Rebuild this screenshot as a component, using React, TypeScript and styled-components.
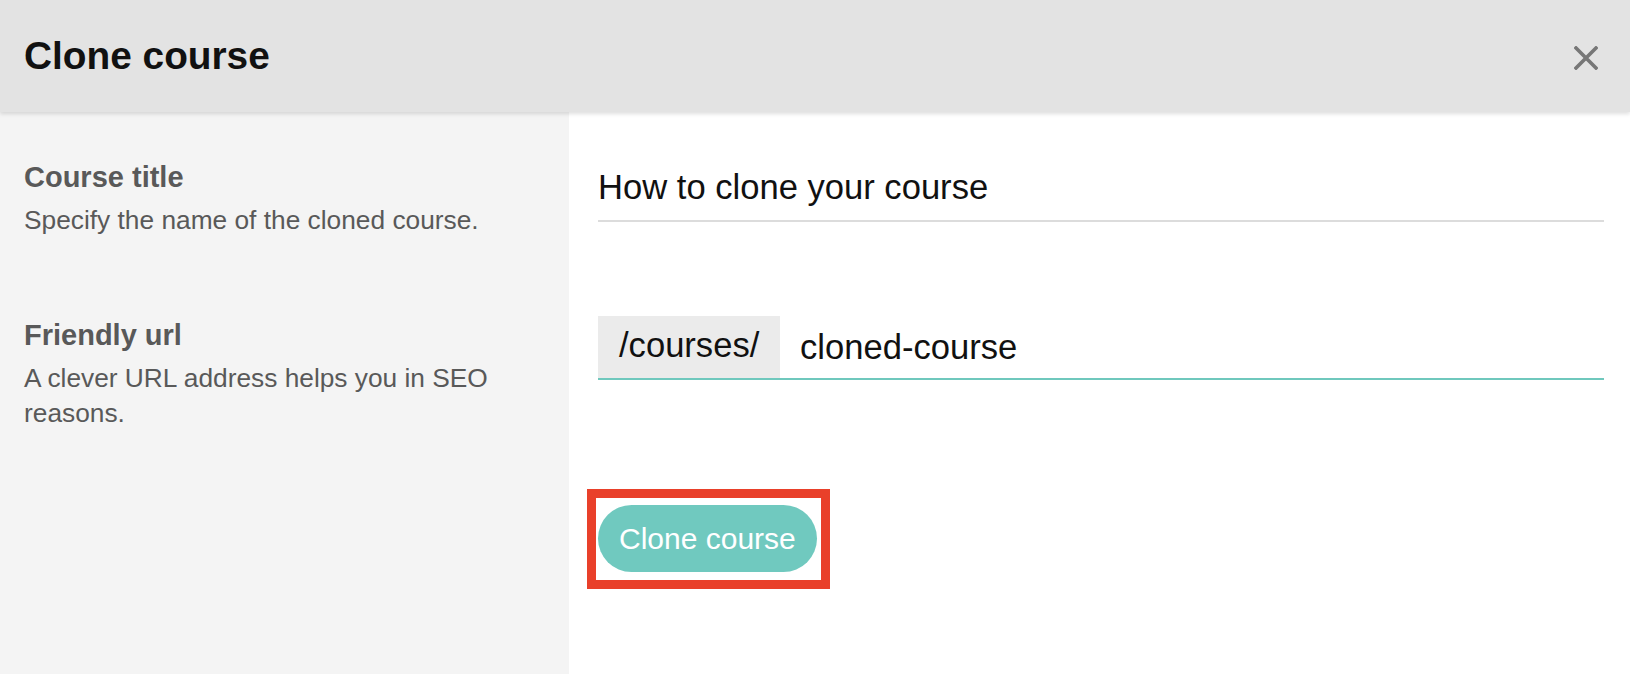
import React from "react";
import styled, { createGlobalStyle } from "styled-components";

const GlobalStyle = createGlobalStyle`
  html, body {
    margin: 0;
    padding: 0;
    background: #ffffff;
    font-family: "Liberation Sans", Arial, Helvetica, sans-serif;
  }
  * { box-sizing: border-box; }
`;

const Modal = styled.div`
  width: 1630px;
  height: 674px;
  display: flex;
  flex-direction: column;
  overflow: hidden;
  background: #ffffff;
`;

const Header = styled.header`
  position: relative;
  z-index: 1;
  flex: 0 0 112px;
  display: flex;
  align-items: center;
  justify-content: space-between;
  padding: 0 32px 0 24px;
  background: #e3e3e3;
  box-shadow: 0 2px 4px rgba(0, 0, 0, 0.13);
`;

const Title = styled.h1`
  margin: 0;
  font-size: 38.8px;
  font-weight: 700;
  color: #111111;
  line-height: 1;
`;

const CloseButton = styled.button`
  width: 24px;
  height: 24px;
  padding: 0;
  margin-top: 4px;
  border: 0;
  background: transparent;
  display: flex;
  align-items: center;
  justify-content: center;
  cursor: pointer;
`;

const Body = styled.div`
  flex: 1;
  display: flex;
`;

const Sidebar = styled.aside`
  flex: 0 0 569px;
  background: #f4f4f4;
  padding: 48px 60px 0 24px;
  display: flex;
  flex-direction: column;
  gap: 80px;
`;

const FieldInfo = styled.div`
  display: flex;
  flex-direction: column;
  gap: 9px;
`;

const Label = styled.div`
  font-size: 29px;
  font-weight: 700;
  line-height: 34px;
  color: #595959;
`;

const Hint = styled.div`
  font-size: 26.3px;
  line-height: 35px;
  color: #595959;
`;

const Main = styled.main`
  flex: 1;
  padding: 55px 26px 0 29px;
  display: flex;
  flex-direction: column;
`;

const TextField = styled.div<{ $focused?: boolean }>`
  display: flex;
  align-items: stretch;
  border-bottom: 2px solid ${(p) => (p.$focused ? "#6fc8bd" : "#dcdcdc")};
`;

const FieldValue = styled.span<{ $padBottom?: number }>`
  font-size: 34.6px;
  line-height: 40px;
  color: #111111;
  padding-bottom: ${(p) => p.$padBottom ?? 0}px;
  display: flex;
  align-items: center;
`;

const Prefix = styled.span`
  background: #ebebeb;
  height: 62px;
  width: 182px;
  padding: 0 0 4px 21px;
  display: flex;
  align-items: center;
  font-size: 34.6px;
  color: #111111;
  margin-right: 20px;
`;

const UrlRow = styled.div`
  margin-top: 94px;
`;

const Highlight = styled.div`
  margin: 109px 0 0 -11px;
  align-self: flex-start;
  border: 9px solid #e9402a;
  padding: 7px 4px 8px 2px;
`;

const PrimaryButton = styled.button`
  height: 67px;
  padding: 0 21px;
  border: 0;
  border-radius: 34px;
  background: #70c9bf;
  color: #ffffff;
  font-family: "Liberation Sans", Arial, Helvetica, sans-serif;
  font-size: 30px;
  line-height: 1;
  cursor: pointer;
`;

export default function App() {
  return (
    <>
      <GlobalStyle />
      <Modal>
        <Header>
          <Title>Clone course</Title>
          <CloseButton aria-label="Close">
            <svg width="24" height="24" viewBox="0 0 24 24">
              <path
                d="M2 2 L22 22 M22 2 L2 22"
                stroke="#777777"
                strokeWidth="3.6"
                strokeLinecap="square"
                fill="none"
              />
            </svg>
          </CloseButton>
        </Header>
        <Body>
          <Sidebar>
            <FieldInfo>
              <Label>Course title</Label>
              <Hint>Specify the name of the cloned course.</Hint>
            </FieldInfo>
            <FieldInfo>
              <Label>Friendly url</Label>
              <Hint>A clever URL address helps you in SEO reasons.</Hint>
            </FieldInfo>
          </Sidebar>
          <Main>
            <TextField>
              <FieldValue $padBottom={13}>How to clone your course</FieldValue>
            </TextField>
            <UrlRow>
              <TextField $focused>
                <Prefix>/courses/</Prefix>
                <FieldValue>cloned-course</FieldValue>
              </TextField>
            </UrlRow>
            <Highlight>
              <PrimaryButton>Clone course</PrimaryButton>
            </Highlight>
          </Main>
        </Body>
      </Modal>
    </>
  );
}
